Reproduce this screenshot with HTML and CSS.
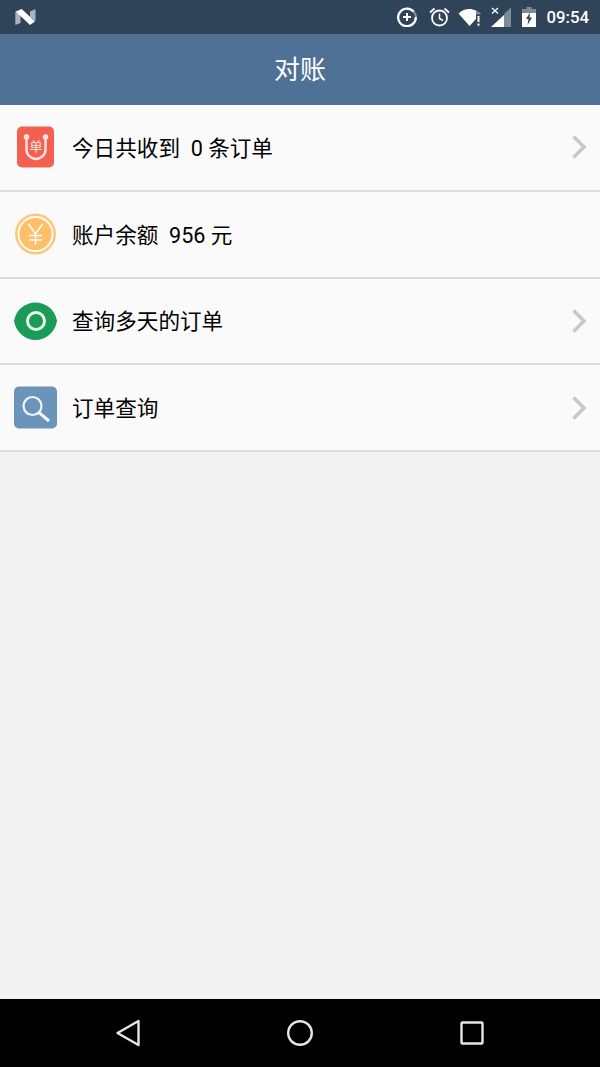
FILE: index.html
```html
<!DOCTYPE html>
<html lang="zh-CN">
<head>
	<meta charset="UTF-8">
	<title>对账</title>
	<link rel="stylesheet" href="styles.css">
</head>
<body>
	<div class="status-bar">
		<svg width="22" height="18" viewBox="0 0 22 18">
			<path d="M0.300 3.500 L5.500 6 V15 L0.300 17 Z" fill="#a9b3bf"/>
			<path d="M15 3.500 L20.500 1 V13 L15 9 Z" fill="#a9b3bf"/>
			<path d="M0.700 3.500 L6.700 1 L20 13.500 L15 17 Z" fill="#fff"/>
		</svg>
		<div class="status-right">
			<svg width="20" height="20" viewBox="0 0 20 20">
				<path d="M16.800 4.800 A8.800 8.800 0 1 0 18.800 10" fill="none" stroke="#fff" stroke-width="2.300"/>
				<path d="M16.800 4.800 A8.800 8.800 0 0 1 18.800 10" fill="none" stroke="#7d8a99" stroke-width="2.300"/>
				<path d="M10 6 V14 M6 10 H14" stroke="#fff" stroke-width="2"/>
			</svg>
			<svg class="alarm" width="21" height="20" viewBox="0 0 21 20">
				<circle cx="10.500" cy="11" r="7.500" fill="none" stroke="#fff" stroke-width="1.800"/>
				<path d="M10.500 6.500 V11.500 L14 13.500" fill="none" stroke="#fff" stroke-width="1.500"/>
				<path d="M1 5.500 L5.500 1.500 M20 5.500 L15.500 1.500" stroke="#fff" stroke-width="1.800"/>
			</svg>
			<svg class="wifi" width="24" height="20" viewBox="0 0 24 20">
				<path d="M0.500 6.500 C6 1 13 1 18 3.500 V12 L11.500 19 Z" fill="#fff"/>
				<path d="M18 3.500 C20 4.300 21.500 5 23 6.500 L22 7.500 H18 Z" fill="#7d8a99"/>
				<path d="M19.500 9 H21.500 V15 H19.500 Z M19.500 16.500 H21.500 V18.800 H19.500 Z" fill="#fff"/>
			</svg>
			<svg class="signal" width="20" height="20" viewBox="0 0 20 20">
				<path d="M0 20 L13 8 V20 Z" fill="#fff"/>
				<path d="M13 7 L20 0.500 V20 H13 Z" fill="#7d8a99"/>
				<path d="M1 1 L7 6.500 M7 1 L1 6.500" stroke="#fff" stroke-width="1.300"/>
			</svg>
			<svg class="battery" width="14" height="20" viewBox="0 0 14 20">
				<path d="M4.500 0 H9.500 V2 H14 V6 H0 V2 H4.500 Z" fill="#7d8a99"/>
				<path d="M0 6 H14 V20 H0 Z" fill="#fff"/>
				<path d="M8 5.500 L4 12 H6.500 L5.500 18 L10 10.500 H7.500 Z" fill="#2f4359"/>
			</svg>
			<span class="clock">09:54</span>
		</div>
	</div>
	<div class="toolbar">对账</div>

	<div class="main">
		<div class="row">
			<svg class="row-icon" width="44" height="44" viewBox="0 0 44 44">
				<rect x="3" y="1.500" width="37" height="41" rx="5" fill="#f4604f"/>
				<path d="M12.500 12 V24.500 A9.500 9.500 0 0 0 31.500 24.500 V12" fill="none" stroke="#fbe3df" stroke-width="2.400"/>
				<circle cx="12.500" cy="12" r="2.800" fill="#fbe3df"/>
				<circle cx="31.500" cy="12" r="2.800" fill="#fbe3df"/>
				<text class="icon-text" x="22" y="26" text-anchor="middle">单</text>
			</svg>
			<span class="row-text">今日共收到&nbsp; 0 条订单</span>
			<svg class="arrow" width="16" height="26" viewBox="0 0 16 26">
				<path d="M2.500 2.500 L13 13 L2.500 23.500" fill="none" stroke="#c9c9c9" stroke-width="3.600"/>
			</svg>
		</div>
		<div class="row">
			<svg class="row-icon" width="44" height="44" viewBox="0 0 44 44">
				<circle cx="21.500" cy="22" r="20.500" fill="#fec679"/>
				<circle cx="21.500" cy="22" r="17" fill="#ffbf69" stroke="#fff" stroke-width="1.800"/>
				<path d="M14.500 12 L21.500 22 L28.500 12 M21.500 22 V33 M15 23.500 H28 M15 28 H28" fill="none" stroke="#fff" stroke-width="1.500"/>
			</svg>
			<span class="row-text">账户余额&nbsp; 956 元</span>
		</div>
		<div class="row">
			<svg class="row-icon" width="44" height="44" viewBox="0 0 44 44">
				<path d="M0 22 C2 10 12 3.500 21.500 3.500 C31 3.500 41 10 43 22 C41 34 31 41 21.500 41 C12 41 2 34 0 22 Z" fill="#1a9b58"/>
				<circle cx="22" cy="22" r="8.500" fill="none" stroke="#e8f5ee" stroke-width="3"/>
			</svg>
			<span class="row-text">查询多天的订单</span>
			<svg class="arrow" width="16" height="26" viewBox="0 0 16 26">
				<path d="M2.500 2.500 L13 13 L2.500 23.500" fill="none" stroke="#c9c9c9" stroke-width="3.600"/>
			</svg>
		</div>
		<div class="row">
			<svg class="row-icon" width="44" height="44" viewBox="0 0 44 44">
				<rect x="0" y="0.500" width="43" height="42" rx="5" fill="#6a94bb"/>
				<circle cx="18.500" cy="20" r="9" fill="none" stroke="#f2f6fa" stroke-width="2.200"/>
				<path d="M25 26.500 L35 35" stroke="#f2f6fa" stroke-width="3"/>
			</svg>
			<span class="row-text">订单查询</span>
			<svg class="arrow" width="16" height="26" viewBox="0 0 16 26">
				<path d="M2.500 2.500 L13 13 L2.500 23.500" fill="none" stroke="#c9c9c9" stroke-width="3.600"/>
			</svg>
		</div>
	</div>

	<div class="nav-bar">
		<svg width="24" height="28" viewBox="0 0 24 28">
			<path d="M22.500 2 V26 L1.500 14 Z" fill="none" stroke="#e6e6e6" stroke-width="2.400" stroke-linejoin="round"/>
		</svg>
		<svg width="26" height="28" viewBox="0 0 26 28">
			<circle cx="13" cy="14" r="11.800" fill="none" stroke="#e6e6e6" stroke-width="2.400"/>
		</svg>
		<svg width="24" height="24" viewBox="0 0 24 24">
			<rect x="1.500" y="1.500" width="21" height="21" rx="1" fill="none" stroke="#e6e6e6" stroke-width="2.400"/>
		</svg>
	</div>
</body>
</html>
```

FILE: styles.css
```css
* {
	box-sizing: border-box;
}

body {
	margin: 0;
	height: 1067px;
	display: flex;
	flex-direction: column;
	overflow: hidden;
	background-color: #f3f3f3;
	font-family: "Roboto", "Noto Sans CJK SC", sans-serif;
}

.status-bar {
	height: 34px;
	padding: 0 11px 0 15px;
	display: flex;
	align-items: center;
	justify-content: space-between;
	background-color: #2f4359;
}

.status-right {
	display: flex;
	align-items: center;
}

.alarm {
	margin-left: 12px;
}

.wifi {
	margin-left: 8px;
}

.signal {
	margin-left: 9px;
}

.battery {
	margin-left: 11px;
}

.clock {
	margin-left: 10px;
	color: #fff;
	font-size: 16.8px;
	font-weight: 500;
}

.toolbar {
	height: 71px;
	padding-bottom: 5px;
	display: flex;
	align-items: center;
	justify-content: center;
	background-color: #507196;
	color: #fff;
	font-size: 26px;
}

.main {
	flex: 1;
}

.row {
	height: 86.75px;
	padding: 0 13px 0 14px;
	display: flex;
	align-items: center;
	background-color: #fafafa;
	border-bottom: 2px solid #dcdcdc;
}

.row-icon {
	flex-shrink: 0;
}

.row-text {
	flex: 1;
	margin-left: 14px;
	padding-bottom: 2px;
	color: #000;
	font-size: 21.6px;
	white-space: pre;
}

.icon-text {
	fill: #fbe3df;
	font-size: 13px;
	font-family: "Noto Sans CJK SC", sans-serif;
}

.nav-bar {
	height: 68px;
	padding: 0 116px;
	display: flex;
	align-items: center;
	justify-content: space-between;
	background-color: #000;
}
```
